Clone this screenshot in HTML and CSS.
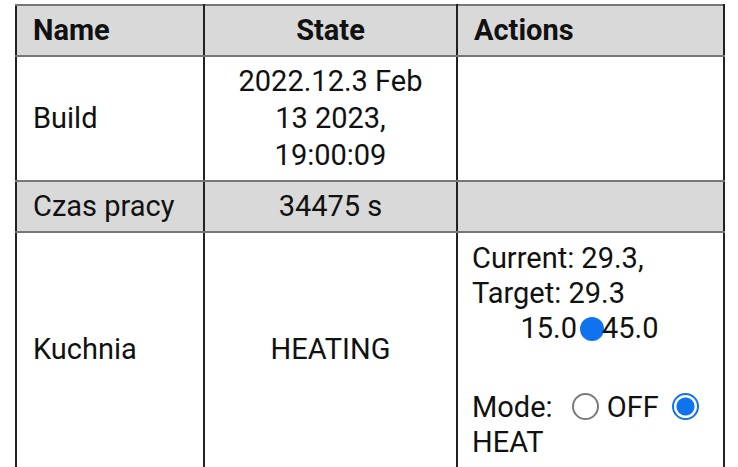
FILE: index.html
```html
<!DOCTYPE html>
<html lang="pl">

<head>
  <meta charset="UTF-8" />
  <meta name="viewport" content="width=device-width, initial-scale=1.0" />
  <title>ESP</title>
  <link rel="stylesheet" href="styles.css">
</head>

<body>
  <table id="states">
    <thead>
      <tr>
        <th class="col-name">Name</th>
        <th class="col-state">State</th>
        <th class="col-actions">Actions</th>
      </tr>
    </thead>
    <tbody>
      <tr>
        <td>Build</td>
        <td class="state">2022.12.3 Feb<br>13 2023,<br>19:00:09</td>
        <td></td>
      </tr>
      <tr class="grey">
        <td>Czas pracy</td>
        <td class="state">34475 s</td>
        <td></td>
      </tr>
      <tr class="climate">
        <td>Kuchnia</td>
        <td class="state">HEATING</td>
        <td class="actions">
          <div>Current: 29.3,</div>
          <div>Target: 29.3</div>
          <div class="range">15.0<span class="thumb"></span>45.0</div>
          <div>Mode: <span class="radio"></span>OFF <span class="radio checked"></span></div>
          <div>HEAT</div>
        </td>
      </tr>
    </tbody>
  </table>
</body>

</html>
```

FILE: styles.css
```css
* {
  box-sizing: border-box;
}

body {
  margin: 0;
  background: #fff;
  font-family: Roboto, "Liberation Sans", sans-serif;
  color: #111;
}

#states {
  margin: 4px 0 0 15px;
  width: 708px;
  border-collapse: collapse;
  table-layout: fixed;
  font-size: 29px;
  line-height: 37px;
}

th,
td {
  border-left: 2px solid #222;
  border-right: 2px solid #222;
  border-top: 2px solid #777;
  border-bottom: 2px solid #777;
  padding: 6px 16px;
  text-align: left;
  vertical-align: middle;
}

th {
  background-color: #d9d9d9;
  font-weight: bold;
}

.col-name {
  width: 188px;
}

.col-state {
  width: 253px;
  text-align: center;
}

.col-actions {
  width: 267px;
}

.grey td {
  background-color: #d9d9d9;
}

td.state {
  text-align: center;
}

/* ostatni wiersz wychodzi poza ekran */
.climate td {
  padding-bottom: 18px;
}

.actions {
  padding-left: 14px;
  line-height: 35px;
  vertical-align: top;
}

.actions div:first-child {
  margin-top: 2px;
}

.range {
  text-align: center;
  margin-bottom: 44px;
}

.thumb {
  display: inline-block;
  width: 24px;
  height: 24px;
  margin: 0 -2px 0 3px;
  border-radius: 50%;
  background: #0f72ee;
  vertical-align: -3px;
}

.radio {
  display: inline-block;
  width: 27px;
  height: 27px;
  margin: 0 8px 0 12px;
  border: 2px solid #7a7a7a;
  border-radius: 50%;
  vertical-align: -3px;
}

.radio.checked {
  margin: 0 0 0 6px;
  border: 2px solid #0f72ee;
  background: radial-gradient(circle, #0f72ee 0 8.5px, #fff 9.5px);
}
```
